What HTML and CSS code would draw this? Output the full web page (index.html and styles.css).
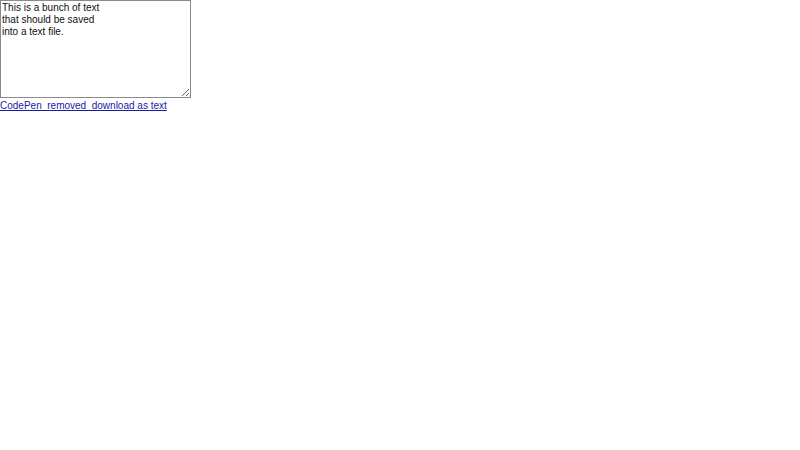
FILE: index.html
```html
<!DOCTYPE html>
<html>
<head>
<meta charset="utf-8">
<link rel="stylesheet" href="styles.css">
</head>
<body>
<div class="wrap">
<textarea class="box">This is a bunch of text
that should be saved
into a text file.</textarea>
<a class="dl" href="#">CodePen_removed_download as text</a>
</div>
</body>
</html>
```
FILE: styles.css
```css
html, body {
  margin: 0;
  padding: 0;
  background: #fff;
}
.wrap {
  display: flex;
  flex-direction: column;
  align-items: flex-start;
  font-family: "Liberation Sans", Arial, sans-serif;
}
.box {
  box-sizing: border-box;
  width: 191px;
  height: 98px;
  margin: 0;
  padding: 1px 1px;
  border: 1px solid #8a8a8a;
  font-family: "Liberation Sans", Arial, sans-serif;
  font-size: 10px;
  line-height: 12px;
  color: #111;
  resize: both;
}
.dl {
  font-size: 10px;
  line-height: 15px;
  color: #1a1aa6;
  text-decoration: underline;
}
```
